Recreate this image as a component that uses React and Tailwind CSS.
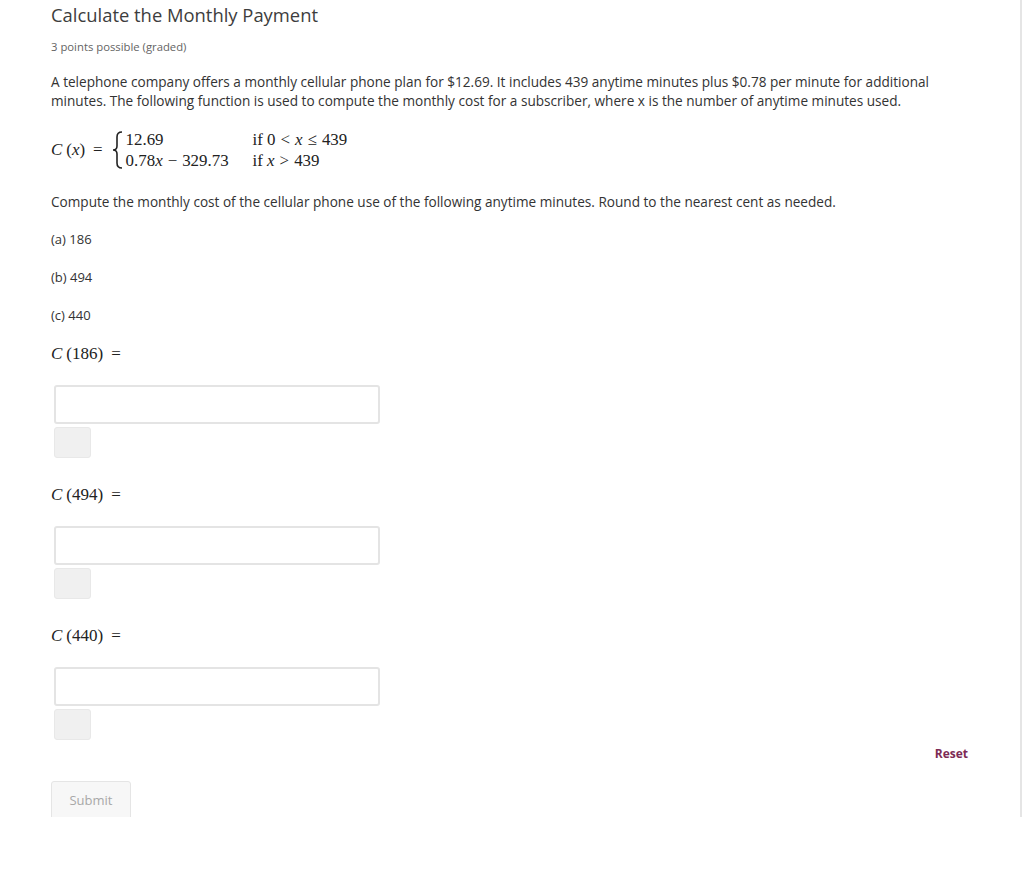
import React from 'react';

const sans = { fontFamily: '"Open Sans", "Noto Sans", sans-serif' };
const serif = { fontFamily: '"Liberation Serif", "DejaVu Serif", serif' };

function MathLabel({ arg }) {
  return (
    <div className="text-[17px] text-[#222] leading-none h-[20px] flex items-center" style={serif}>
      <span className="italic">C</span>
      <span className="ml-[4px]">(</span>
      <span>{arg}</span>
      <span>)</span>
      <span className="ml-[8px]">=</span>
    </div>
  );
}

function AnswerBlock({ arg }) {
  return (
    <div className="flex flex-col">
      <MathLabel arg={arg} />
      <input
        type="text"
        className="mt-[22px] ml-[3px] w-[326px] h-[39px] border-2 border-[#e4e4e4] rounded-[3px] bg-white outline-none"
      />
      <div className="mt-[3px] ml-[3px] w-[37px] h-[31px] rounded-[3px] bg-[#f0f0f0] border border-[#e8e8e8]" />
    </div>
  );
}

export default function App() {
  return (
    <div className="w-[1022px] h-[817px] overflow-hidden border-r-2 border-[#e5e5e5] bg-white" style={sans}>
      <div className="pl-[51px] pr-[52px] pt-[3px]">
        <h2 className="text-[18.4px] text-[#3d3d3d] leading-[24px]">Calculate the Monthly Payment</h2>
        <div className="mt-[12px] text-[11.3px] text-[#646464] leading-[16px]">3 points possible (graded)</div>

        <p className="mt-[17px] text-[13.6px] text-[#333] leading-[19px]">
          A telephone company offers a monthly cellular phone plan for $12.69. It includes 439 anytime minutes plus $0.78 per minute for additional minutes. The following function is used to compute the monthly cost for a subscriber, where x is the number of anytime minutes used.
        </p>

        {/* piecewise formula */}
        <div className="mt-[19px] flex items-center text-[16.9px] text-[#222]" style={serif}>
          <span className="italic">C</span>
          <span className="ml-[4px]">(</span>
          <span className="italic">x</span>
          <span>)</span>
          <span className="ml-[8px]">=</span>
          <svg className="ml-[9px]" width="11" height="38" viewBox="0 0 11 38">
            <path
              d="M10 1 C6 1 5 3 5 6 L5 15 C5 17.5 3.5 19 1 19 C3.5 19 5 20.5 5 23 L5 32 C5 35 6 37 10 37"
              fill="none"
              stroke="#222"
              strokeWidth="1.6"
            />
          </svg>
          <div className="ml-[3px] grid grid-cols-[127px_auto] leading-[21px]">
            <span>12.69</span>
            <span>
              if 0<span className="mx-[5px]">&lt;</span><span className="italic">x</span><span className="mx-[5px]">≤</span>439
            </span>
            <span>
              0.78<span className="italic">x</span><span className="mx-[5px]">−</span>329.73
            </span>
            <span>
              if <span className="italic">x</span><span className="mx-[5px]">&gt;</span>439
            </span>
          </div>
        </div>

        <p className="mt-[21px] text-[13.6px] text-[#333] leading-[19px]">
          Compute the monthly cost of the cellular phone use of the following anytime minutes. Round to the nearest cent as needed.
        </p>

        <div className="mt-[19px] flex flex-col gap-[19px] text-[13px] text-[#333] leading-[19px]">
          <div>(a) 186</div>
          <div>(b) 494</div>
          <div>(c) 440</div>
        </div>

        <div className="mt-[18px] flex flex-col gap-[26px]">
          <AnswerBlock arg="186" />
          <AnswerBlock arg="494" />
          <AnswerBlock arg="440" />
        </div>

        <div className="mt-[6px] flex justify-end">
          <button className="text-[12px] font-bold text-[#7d2b55] leading-[16px]">Reset</button>
        </div>

        <button className="mt-[19px] w-[80px] h-[40px] border border-[#e5e5e5] rounded-[3px] bg-[#f7f7f7] text-[13px] text-[#a8a8a8]">
          Submit
        </button>
      </div>
    </div>
  );
}
